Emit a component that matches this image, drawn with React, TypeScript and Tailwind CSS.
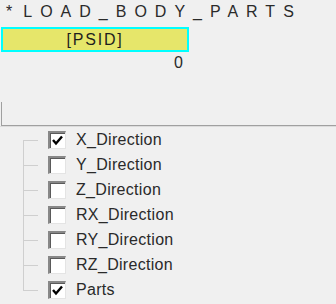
const items = [
  { label: "X_Direction", checked: true },
  { label: "Y_Direction", checked: false },
  { label: "Z_Direction", checked: false },
  { label: "RX_Direction", checked: false },
  { label: "RY_Direction", checked: false },
  { label: "RZ_Direction", checked: false },
  { label: "Parts", checked: true },
];

function CheckBox({ checked }: { checked: boolean }) {
  return (
    <div className="w-[18px] h-[18px] shrink-0 bg-white border-t-2 border-l-2 border-t-[#888888] border-l-[#888888] border-r border-b border-r-[#e4e4e4] border-b-[#e4e4e4] shadow-[inset_1px_1px_0_#5a5a5a]">
      {checked && (
        <svg viewBox="0 0 15 15" className="w-[15px] h-[15px]">
          <path d="M3 7 L6 10.5 L12 3.5" fill="none" stroke="#000" strokeWidth="2.4" />
        </svg>
      )}
    </div>
  );
}

function TreeRow({ label, checked, first, last }: { label: string; checked: boolean; first: boolean; last: boolean }) {
  return (
    <div className="flex items-center h-[25px]">
      <div className="ml-[23px] w-[15px] h-full flex flex-col">
        <div className={`h-[14px] border-b border-[#cfcfcf] ${first ? "" : "border-l"}`} />
        <div className={`flex-1 border-[#cfcfcf] ${last ? "" : "border-l"}`} />
      </div>
      <div className="ml-[10px]">
        <CheckBox checked={checked} />
      </div>
      <span className="ml-[10px] text-[16px] leading-[18px] tracking-[0.3px] text-[#2a2a2a]">{label}</span>
    </div>
  );
}

export default function App() {
  return (
    <div className="w-[336px] h-[304px] bg-[#f0f0f0] overflow-hidden font-['Liberation_Sans',Arial,sans-serif]">
      <div className="pt-[3px] pl-[6px] text-[16px] leading-[18px] tracking-[8px] text-[#2a2a2a] whitespace-nowrap">
        *<span className="ml-[3px]">LOAD_BODY_PARTS</span>
      </div>
      <div className="mt-[6px] ml-px w-[188px] h-[25px] border-2 border-[#00ffff] bg-[#e6e66a] flex items-center justify-center text-[16px] leading-[18px] tracking-[1.8px] text-[#1e1e1e]">
        [PSID]
      </div>
      <div className="mt-[2px] w-[183px] text-right text-[16px] leading-[18px] text-[#2a2a2a]">0</div>
      <div className="mt-[30px] ml-px h-[24px] border-l border-b border-[#a0a0a0]" />
      <div className="h-px bg-[#dcdcdc]" />
      <div>
        {items.map((it, i) => (
          <TreeRow key={it.label} label={it.label} checked={it.checked} first={i === 0} last={i === items.length - 1} />
        ))}
      </div>
    </div>
  );
}
